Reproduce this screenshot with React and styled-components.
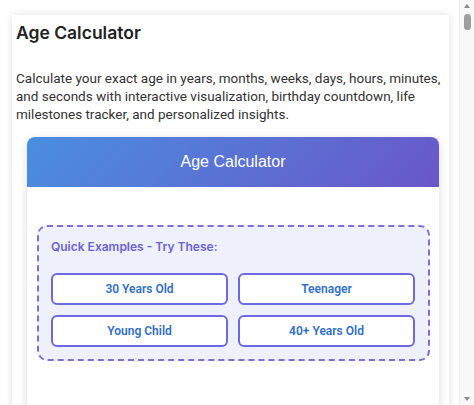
import React from "react";
import styled, { createGlobalStyle } from "styled-components";

const GlobalStyle = createGlobalStyle`
  body {
    margin: 0;
    background: #ffffff;
    font-family: Inter, "Noto Sans", sans-serif;
    color: #333;
  }
`;

const EXAMPLES = ["30 Years Old", "Teenager", "Young Child", "40+ Years Old"];

const App = () => {
  return (
    <Page>
      <GlobalStyle />
      <OuterCard>
        <PageTitle>Age Calculator</PageTitle>
        <Intro>
          Calculate your exact age in years, months, weeks, days, hours, minutes,
          and seconds with interactive visualization, birthday countdown, life
          milestones tracker, and personalized insights.
        </Intro>

        <CalcCard>
          <CalcHeader>Age Calculator</CalcHeader>
          <CalcBody>
            <ExamplesBox>
              <ExamplesTitle>Quick Examples - Try These:</ExamplesTitle>
              <ExamplesGrid>
                {EXAMPLES.map((label) => (
                  <ExampleButton key={label} type="button">
                    {label}
                  </ExampleButton>
                ))}
              </ExamplesGrid>
            </ExamplesBox>
          </CalcBody>
        </CalcCard>
      </OuterCard>

      {/* window scrollbar, as in the screenshot */}
      <Scrollbar>
        <Arrow />
        <Thumb />
        <Arrow $down />
      </Scrollbar>
    </Page>
  );
};

const Page = styled.div`
  padding: 15px 10px 40px 12px;
  margin-right: 15px;
`;

const OuterCard = styled.div`
  background: #fff;
  padding: 4px 1px 20px 4px;
  box-shadow: 0 0 8px rgba(0, 0, 0, 0.12);
`;

const PageTitle = styled.h1`
  margin: 0;
  font-size: 17.5px;
  font-weight: 600;
  line-height: 28px;
  color: #222;
`;

const Intro = styled.p`
  margin: 22px 0 14px;
  font-family: Roboto, Inter, sans-serif;
  font-size: 13.5px;
  line-height: 18px;
  color: #333;
`;

const CalcCard = styled.div`
  margin: 0 9px 0 11px;
  border-radius: 8px;
  overflow: hidden;
  background: #fff;
  box-shadow: 0 2px 8px rgba(0, 0, 0, 0.15);
`;

const CalcHeader = styled.div`
  height: 50px;
  display: flex;
  align-items: center;
  justify-content: center;
  background: linear-gradient(135deg, #4a8fe0 0%, #6a56c9 100%);
  color: #fff;
  font-family: "Liberation Sans", Arial, sans-serif;
  font-size: 16px;
`;

const CalcBody = styled.div`
  padding: 38px 9px 200px 10px;
`;

const ExamplesBox = styled.div`
  background: #eef0fc;
  border: 2px dashed #7d6fd6;
  border-radius: 10px;
  padding: 11px 13px 12px 12px;
`;

const ExamplesTitle = styled.div`
  font-size: 12px;
  font-weight: 600;
  line-height: 18px;
  color: #6a63d4;
  margin-bottom: 17px;
`;

const ExamplesGrid = styled.div`
  display: grid;
  grid-template-columns: 1fr 1fr;
  gap: 10px;
`;

const ExampleButton = styled.button`
  height: 32px;
  background: #fff;
  border: 2px solid #6c6ae0;
  border-radius: 6px;
  font-family: Roboto, Inter, sans-serif;
  font-size: 12px;
  font-weight: 600;
  color: #2f6fcb;
  cursor: pointer;
`;

const Scrollbar = styled.div`
  position: fixed;
  top: 0;
  right: 0;
  width: 15px;
  height: 100vh;
  background: #f8f8f8;
  border-left: 1px solid #ededed;
  box-sizing: border-box;
  display: flex;
  flex-direction: column;
  align-items: center;
`;

const Arrow = styled.div`
  width: 0;
  height: 0;
  border-left: 3.5px solid transparent;
  border-right: 3.5px solid transparent;
  ${({ $down }) =>
    $down
      ? "border-top: 4px solid #8a8a8a; margin-top: auto; margin-bottom: 4px;"
      : "border-bottom: 4px solid #8a8a8a; margin-top: 4px;"}
`;

const Thumb = styled.div`
  width: 7px;
  height: 16px;
  margin-top: 6px;
  border-radius: 4px;
  background: #9e9e9e;
`;

export default App;
